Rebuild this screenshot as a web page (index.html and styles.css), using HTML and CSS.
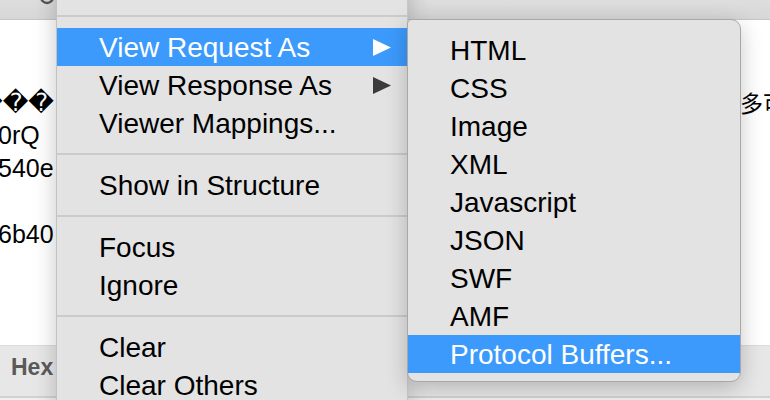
FILE: index.html
```html
<!DOCTYPE html>
<html>
<head>
<meta charset="utf-8">
<link rel="stylesheet" href="styles.css">
</head>
<body>
<div class="app">
  <div class="toolbar">
    <svg class="tb-glyph" width="20" height="8" viewBox="0 0 20 8"><circle cx="10" cy="-3" r="6" fill="none" stroke="#555" stroke-width="2.4"/></svg>
  </div>
  <div class="content">
    <div class="line"><span class="rep">&#xFFFD;&#xFFFD;&#xFFFD;</span><span class="cjk">多可</span></div>
    <div class="line">0rQ</div>
    <div class="line">540e</div>
    <div class="line">&nbsp;</div>
    <div class="line">6b40</div>
  </div>
  <div class="tabs"><span class="tab">Hex</span></div>
  <div class="tabs-edge"></div>

  <div class="menu main">
    <div class="item">&nbsp;</div>
    <div class="sep"></div>
    <div class="item sel"><span>View Request As</span><svg class="arrow" width="18" height="17" viewBox="0 0 18 17"><path d="M0 0L18 8.5L0 17Z"/></svg></div>
    <div class="item"><span>View Response As</span><svg class="arrow" width="18" height="17" viewBox="0 0 18 17"><path d="M0 0L18 8.5L0 17Z"/></svg></div>
    <div class="item"><span>Viewer Mappings...</span></div>
    <div class="sep"></div>
    <div class="item"><span>Show in Structure</span></div>
    <div class="sep"></div>
    <div class="item"><span>Focus</span></div>
    <div class="item"><span>Ignore</span></div>
    <div class="sep"></div>
    <div class="item"><span>Clear</span></div>
    <div class="item"><span>Clear Others</span></div>
  </div>

  <div class="menu sub">
    <div class="item"><span>HTML</span></div>
    <div class="item"><span>CSS</span></div>
    <div class="item"><span>Image</span></div>
    <div class="item"><span>XML</span></div>
    <div class="item"><span>Javascript</span></div>
    <div class="item"><span>JSON</span></div>
    <div class="item"><span>SWF</span></div>
    <div class="item"><span>AMF</span></div>
    <div class="item sel"><span>Protocol Buffers...</span></div>
  </div>
</div>
</body>
</html>
```
FILE: styles.css
```css
* { box-sizing: border-box; }
body {
  margin: 0;
  font-family: "Liberation Sans", Arial, sans-serif;
  background: #fff;
}
.app {
  position: relative;
  width: 770px;
  height: 400px;
  overflow: hidden;
  display: flex;
  flex-direction: column;
  background: #fff;
}
.toolbar {
  position: relative;
  height: 20px;
  flex: none;
  background: linear-gradient(#dedede, #d7d7d7);
  border-bottom: 1px solid #c6c6c6;
}
.tb-glyph {
  position: absolute;
  left: 37px;
  top: 0;
}
.content {
  flex: 1;
  overflow: hidden;
  padding-top: 66px;
  font-size: 25px;
  line-height: 33px;
  color: #000;
}
.line {
  display: flex;
  white-space: pre;
  margin-left: -2px;
}
.rep {
  font-family: "DejaVu Sans", sans-serif;
  font-size: 25px;
  margin-left: -21px;
  letter-spacing: 0px;
}
.cjk {
  margin-left: auto;
  margin-right: -16px;
  font-size: 23px;
  font-family: "Noto Sans CJK SC", sans-serif;
}
.tabs {
  flex: none;
  height: 53px;
  background: #e7e7e7;
  border-top: 1px solid #dcdcdc;
  border-bottom: 2px solid #d2d2d2;
  padding: 10px 0 0 11px;
}
.tab {
  display: block;
  font-size: 23px;
  line-height: 23px;
  font-weight: bold;
  color: #5a5a5a;
}
.tabs-edge {
  flex: none;
  height: 2px;
  background: #f0f0f0;
}
.menu {
  position: absolute;
  background: #e3e3e3;
  font-size: 28px;
  line-height: 38px;
  color: #000;
}
.main {
  left: 56px;
  top: -34px;
  width: 352px;
  height: 460px;
  border-left: 1px solid #c2c2c2;
  border-right: 1px solid #c8c8c8;
  box-shadow: 0 0 22px rgba(0, 0, 0, 0.22);
}
.sub {
  left: 407px;
  top: 19px;
  width: 334px;
  height: 363px;
  border: 1px solid #a8a8a8;
  border-radius: 5px 10px 10px 10px;
  padding: 11px 0 8px;
  box-shadow: 0 6px 22px rgba(0, 0, 0, 0.22);
  z-index: 2;
}
.item {
  height: 38px;
  display: flex;
  align-items: center;
  justify-content: space-between;
  padding-top: 2px;
  padding-left: 42px;
  padding-right: 16px;
  white-space: nowrap;
}
.item.sel {
  background: #3c9afc;
  color: #fff;
}
.arrow { fill: #3b3b3b; margin-top: -1px; }
.sel .arrow { fill: #fff; }
.sep {
  height: 24px;
  padding-top: 11px;
}
.sep::before {
  content: "";
  display: block;
  height: 2px;
  background: #cbcbcb;
}
```
